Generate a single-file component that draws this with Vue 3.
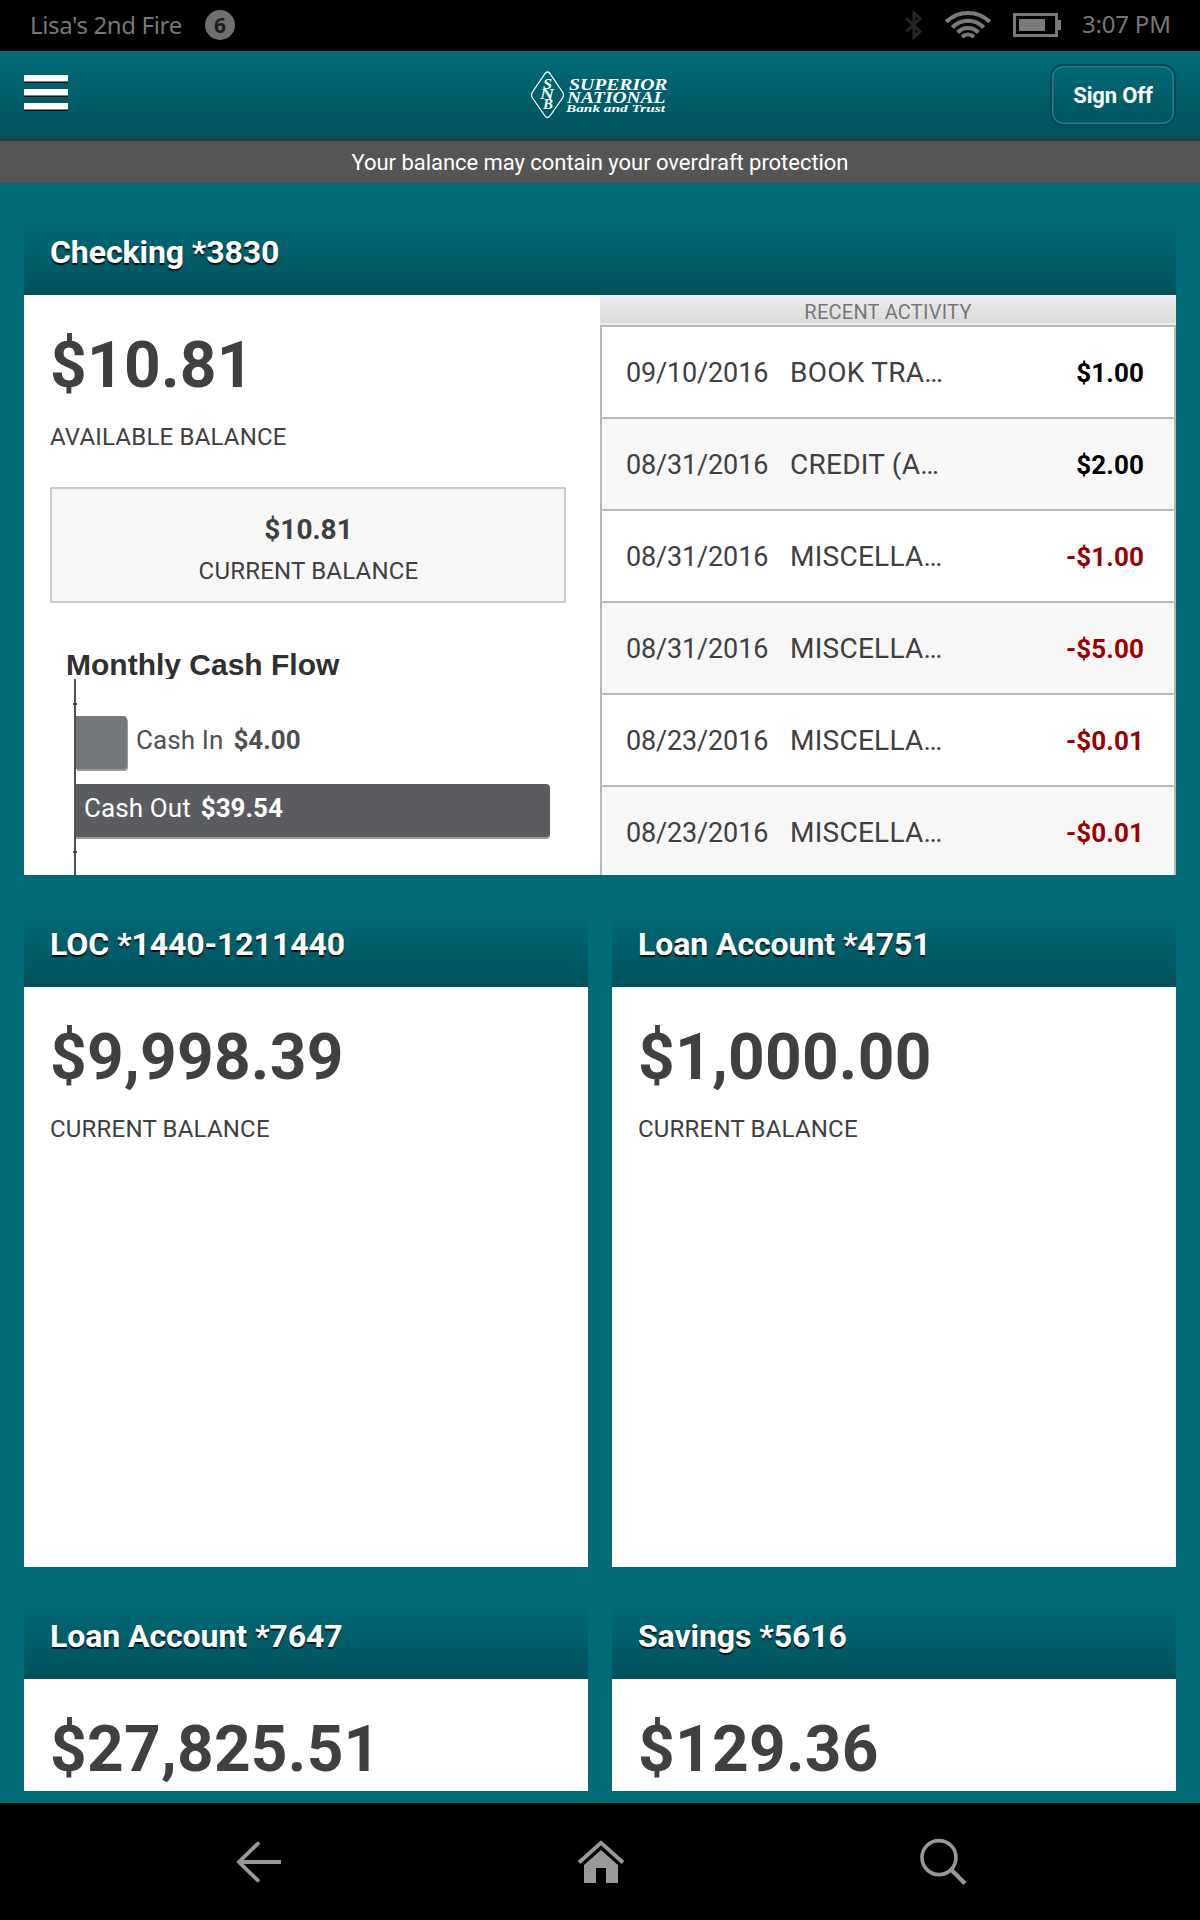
<script setup>
const activity = [
  { date: '09/10/2016', text: 'BOOK TRA…', amount: '$1.00' },
  { date: '08/31/2016', text: 'CREDIT (A…', amount: '$2.00' },
  { date: '08/31/2016', text: 'MISCELLA…', amount: '-$1.00' },
  { date: '08/31/2016', text: 'MISCELLA…', amount: '-$5.00' },
  { date: '08/23/2016', text: 'MISCELLA…', amount: '-$0.01' },
  { date: '08/23/2016', text: 'MISCELLA…', amount: '-$0.01' },
]
const accounts = [
  { name: 'LOC *1440-1211440', balance: '$9,998.39', label: true },
  { name: 'Loan Account *4751', balance: '$1,000.00', label: true },
  { name: 'Loan Account *7647', balance: '$27,825.51' },
  { name: 'Savings *5616', balance: '$129.36' },
]
</script>

<template>
  <div class="device">
    <div class="status">
      <span class="device-name">Lisa's 2nd Fire</span>
      <span class="badge">6</span>
      <svg class="bt" width="18" height="30" viewBox="0 0 18 30">
        <path d="M1.5 8.5 15 21.5 9 27V3l6 5.5L1.5 21.5" fill="none" stroke="#262626" stroke-width="3" />
      </svg>
      <svg class="wifi" width="48" height="30" viewBox="0 0 48 30">
        <g fill="none" stroke="#7a7a7a" stroke-width="4">
          <path d="M2.2 11.8C14.5-.1 33.500-.1 45.800 11.800" />
          <path d="M8.300 17.500C17.100 8.600 30.900 8.600 39.700 17.500" />
          <path d="M13.500 22.500C19.600 16.500 28.400 16.500 34.500 22.500" />
          <path d="M18 27C21.500 23.800 26.500 23.800 30 27" />
        </g>
      </svg>
      <svg class="battery" width="48" height="24" viewBox="0 0 48 24">
        <rect x="1.500" y="1.500" width="42" height="21" fill="none" stroke="#7a7a7a" stroke-width="3" />
        <path d="M6 6h26v12H6zM45 7h3v10h-3z" fill="#7a7a7a" />
      </svg>
      <span class="clock">3:07 PM</span>
    </div>

    <header class="topbar">
      <div class="menu"><i></i><i></i><i></i></div>
      <svg class="logo" width="140" height="48" viewBox="0 0 140 48" fill="#fff">
        <path d="M14.700 3Q17.500-1 20.300 3L32.500 21Q34.500 24 32.500 27L20.300 44.500Q17.500 48.500 14.700 44.500L2.500 27Q.5 24 2.500 21Z" fill="none" stroke="#fff" stroke-width="1.300" />
        <g class="mono">
          <text x="13" y="17.500" textLength="9" lengthAdjust="spacingAndGlyphs">S</text>
          <text x="10" y="28" textLength="14" lengthAdjust="spacingAndGlyphs">N</text>
          <text x="13" y="38.300" textLength="10" lengthAdjust="spacingAndGlyphs">B</text>
        </g>
        <text class="big" x="39" y="18.500" textLength="98.500" lengthAdjust="spacingAndGlyphs">SUPERIOR</text>
        <text class="big" x="37" y="31.500" textLength="98.500" lengthAdjust="spacingAndGlyphs">NATIONAL</text>
        <text class="tag" x="36" y="41.300" textLength="99" lengthAdjust="spacingAndGlyphs">Bank and Trust</text>
      </svg>
      <button class="signoff">Sign Off</button>
    </header>

    <div class="notice">Your balance may contain your overdraft protection</div>

    <main class="accounts">
      <section class="card wide">
        <h2>Checking *3830</h2>
        <div class="body split">
          <div class="summary">
            <div class="amount">$10.81</div>
            <div class="label">AVAILABLE BALANCE</div>
            <div class="box">
              <b>$10.81</b>
              <div class="label">CURRENT BALANCE</div>
            </div>
            <h3>Monthly Cash Flow</h3>
            <div class="chart">
              <div class="row in"><div class="bar" :style="{ width: '51px' }"></div><span>Cash In</span><b>$4.00</b></div>
              <div class="row out"><div class="bar" :style="{ width: '474px' }"><span>Cash Out</span><b>$39.54</b></div></div>
            </div>
          </div>
          <div class="activity">
            <div class="caption">RECENT ACTIVITY</div>
            <ul>
              <li v-for="(a, i) in activity" :key="i">
                <span class="date">{{ a.date }}</span>
                <span class="desc">{{ a.text }}</span>
                <b :class="{ debit: a.amount[0] === '-' }">{{ a.amount }}</b>
              </li>
            </ul>
          </div>
        </div>
      </section>
      <section v-for="acc in accounts" :key="acc.name" class="card">
        <h2>{{ acc.name }}</h2>
        <div class="body">
          <div class="amount">{{ acc.balance }}</div>
          <div v-if="acc.label" class="label">CURRENT BALANCE</div>
        </div>
      </section>
    </main>

    <nav class="nav">
      <svg width="46" height="44" viewBox="0 0 46 44" fill="none" stroke="#999" stroke-width="3.800">
        <path d="M45 22H3M23 2.500 3 22l20 19.500" />
      </svg>
      <svg width="48" height="44" viewBox="0 0 48 44">
        <path d="M2 22.500 24 2.800l22 19.700" fill="none" stroke="#999" stroke-width="3.800" />
        <path d="M24 10 41 25v18H29V28H19v15H7V25z" fill="#999" />
      </svg>
      <svg width="48" height="48" viewBox="0 0 48 48" fill="none" stroke="#999" stroke-width="3.600">
        <circle cx="20" cy="19.600" r="17" />
        <path d="M32 31.500 46 45.500" stroke-width="4.200" />
      </svg>
    </nav>
  </div>
</template>

<style>
body { margin: 0; background: #000; }
</style>

<style scoped>
* { box-sizing: border-box; }
.device {
  width: 1200px;
  height: 1920px;
  display: flex;
  flex-direction: column;
  overflow: hidden;
  background: #006b77;
  color: #404040;
  font-family: Roboto, "Liberation Sans", sans-serif;
}
.status {
  height: 51px;
  flex: none;
  display: flex;
  align-items: center;
  padding: 0 30px 1px;
  background: #000;
  color: #777;
  font: 24px/50px "Noto Sans", sans-serif;
}
.device-name { width: 175px; letter-spacing: -0.35px; }
.badge {
  width: 30px;
  height: 30px;
  border-radius: 50%;
  background: #707070;
  color: #1c1c1c;
  font-size: 21px;
  font-weight: 700;
  line-height: 31px;
  text-align: center;
}
.bt { margin-left: auto; }
.wifi { margin-left: 21px; }
.battery { margin-left: 21px; }
.clock { margin-left: 21px; width: 88px; letter-spacing: -0.2px; line-height: 48px; padding-bottom: 2px; white-space: nowrap; }

.topbar {
  height: 88px;
  flex: none;
  display: grid;
  grid-template-columns: 1fr auto 1fr;
  align-items: start;
  padding: 0 24px;
  background: linear-gradient(#006b77 5%, #00515b);
}
.menu { padding-top: 24px; display: grid; gap: 6px; width: 44px; }
.menu i { height: 8px; background: linear-gradient(#fff 6px, #808080 6px, #808080 7px, #111 7px); }
.logo { margin-top: 20px; }
.logo text { font-family: "Liberation Serif", serif; font-weight: 700; font-style: italic; }
.logo .mono text { font-size: 14px; }
.logo .big { font-size: 16px; }
.logo .tag { font-size: 10.5px; }
.signoff {
  justify-self: end;
  width: 126px;
  height: 62px;
  margin: 13px 0 0;
  padding: 1px 0 0;
  border: 2px solid #00474f;
  border-radius: 13px;
  background: none;
  box-shadow: inset 0 0 0 1.5px #2b7f88;
  color: #fff;
  font: 700 22px Roboto, sans-serif;
  letter-spacing: -0.15px;
}
.notice {
  height: 44px;
  flex: none;
  border-top: 2px solid #363636;
  background: #555;
  color: #fff;
  text-align: center;
  font-size: 22px;
  line-height: 43px;
  letter-spacing: -0.04px;
}

.accounts {
  height: 1608px;
  flex: none;
  overflow: hidden;
  margin-bottom: 12px;
  padding: 24px 24px 0;
  display: grid;
  grid-template-columns: 1fr 1fr;
  grid-template-rows: 668px 668px 200px;
  gap: 24px;
}
.card { display: flex; flex-direction: column; min-width: 0; }
.wide { grid-column: 1 / -1; }
h2 {
  height: 88px;
  flex: none;
  margin: 0;
  padding-left: 26px;
  background: linear-gradient(#006b77 10%, #00515b);
  color: #fff;
  font-size: 32px;
  line-height: 91px;
  letter-spacing: -0.08px;
  text-shadow: 0 2px 1px #111;
}
.body { flex: 1; background: #fff; padding: 31px 26px 0; min-height: 0; overflow: hidden; }
.amount { font-size: 64px; font-weight: 700; line-height: 80px; letter-spacing: 0.25px; }
.amount + .label { margin-top: 17px; }
.label { font-size: 24px; line-height: 28px; letter-spacing: 0.2px; }
.split { display: flex; padding: 0; }
.summary { width: 576px; flex: none; padding: 31px 34px 0 26px; }
.box {
  height: 116px;
  margin-top: 36px;
  padding: 24px 0 0 1px;
  border: 2px solid #ccc;
  background: #f7f7f7;
  text-align: center;
}
.box b { display: block; font-size: 28px; line-height: 33px; }
.box .label { margin-top: 11px; }
h3 {
  margin: 44px 0 0;
  padding-left: 16px;
  color: #303030;
  font: 700 30px/36px "Liberation Sans", sans-serif;
}
.chart {
  position: relative;
  width: 480px;
  height: 196px;
  margin: -4px 0 0 24px;
  padding-top: 37px;
  border-left: 2px solid #505052;
  background: #fff;
  font-size: 26px;
}
.chart::before {
  content: "";
  position: absolute;
  left: -3px;
  top: 24px;
  width: 4px;
  height: 146px;
  border: solid #444;
  border-width: 2px 0;
}
.row { position: relative; height: 53px; display: flex; line-height: 49px; color: #505050; }
.row + .row { margin-top: 15px; }
.row span { letter-spacing: 0.1px; }
.row b { margin-left: 10px; }
.bar { height: 53px; border-radius: 0 4px 4px 0; box-shadow: 1px 2px 0 #999; }
.in .bar { background: #75787b; margin-right: 9px; }
.out .bar { background: #5b5c60; padding-left: 8px; color: #fff; box-shadow: 0 2px 0 #999; }

.activity { flex: 1; }
.caption {
  height: 30px;
  border-bottom: 2px solid #ededed;
  background: linear-gradient(#eee, #dadada);
  color: #777;
  text-align: center;
  font-size: 20px;
  line-height: 34px;
  letter-spacing: 0.25px;
}
ul { list-style: none; margin: 0; padding: 0; border: solid #b8b8b8; border-width: 0 2px; }
li {
  height: 92px;
  display: flex;
  align-items: baseline;
  border-top: 2px solid #b8b8b8;
  padding: 0 30px 0 24px;
  line-height: 91px;
}
li:nth-child(even) { background: #f7f7f7; }
.date { width: 164px; font-size: 27px; letter-spacing: -0.15px; }
.desc { font-size: 28px; letter-spacing: 0.25px; }
li b { margin-left: auto; color: #000; font-size: 26px; letter-spacing: 0.1px; }
li .debit { color: #900; }

.nav {
  height: 117px;
  flex: none;
  display: flex;
  justify-content: space-between;
  align-items: center;
  padding: 0 233px 0 236px;
  background: #000;
}
</style>
